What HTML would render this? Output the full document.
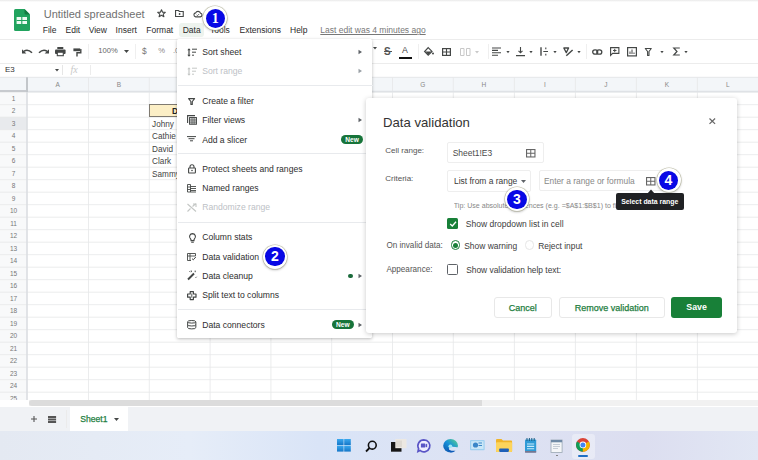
<!DOCTYPE html>
<html><head><meta charset="utf-8">
<style>
*{margin:0;padding:0;box-sizing:border-box}
html,body{width:758px;height:460px;overflow:hidden;background:#fff;font-family:"Liberation Sans",sans-serif;color:#202124}
.a{position:absolute;white-space:nowrap}
.t{position:absolute;white-space:nowrap}
svg{overflow:visible}
</style></head><body>
<svg class="a" style="left:0;top:0" width="758" height="460"><rect x="0" y="77.5" width="758" height="14.4" fill="#f3f6f9"/><line x1="0" x2="758" y1="77.3" y2="77.3" stroke="#e4e6e8" stroke-width="1"/><rect x="0" y="91.9" width="27" height="309.6" fill="#f8f9fa"/><rect x="0" y="117.2" width="27" height="12.5" fill="#e8eaed"/><line x1="0" x2="758" y1="92.20" y2="92.20" stroke="#e6e7e8" stroke-width="0.8"/><line x1="0" x2="758" y1="104.70" y2="104.70" stroke="#e6e7e8" stroke-width="0.8"/><line x1="0" x2="758" y1="117.20" y2="117.20" stroke="#e6e7e8" stroke-width="0.8"/><line x1="0" x2="758" y1="129.70" y2="129.70" stroke="#e6e7e8" stroke-width="0.8"/><line x1="0" x2="758" y1="142.20" y2="142.20" stroke="#e6e7e8" stroke-width="0.8"/><line x1="0" x2="758" y1="154.70" y2="154.70" stroke="#e6e7e8" stroke-width="0.8"/><line x1="0" x2="758" y1="167.20" y2="167.20" stroke="#e6e7e8" stroke-width="0.8"/><line x1="0" x2="758" y1="179.70" y2="179.70" stroke="#e6e7e8" stroke-width="0.8"/><line x1="0" x2="758" y1="192.20" y2="192.20" stroke="#e6e7e8" stroke-width="0.8"/><line x1="0" x2="758" y1="204.70" y2="204.70" stroke="#e6e7e8" stroke-width="0.8"/><line x1="0" x2="758" y1="217.20" y2="217.20" stroke="#e6e7e8" stroke-width="0.8"/><line x1="0" x2="758" y1="229.70" y2="229.70" stroke="#e6e7e8" stroke-width="0.8"/><line x1="0" x2="758" y1="242.20" y2="242.20" stroke="#e6e7e8" stroke-width="0.8"/><line x1="0" x2="758" y1="254.70" y2="254.70" stroke="#e6e7e8" stroke-width="0.8"/><line x1="0" x2="758" y1="267.20" y2="267.20" stroke="#e6e7e8" stroke-width="0.8"/><line x1="0" x2="758" y1="279.70" y2="279.70" stroke="#e6e7e8" stroke-width="0.8"/><line x1="0" x2="758" y1="292.20" y2="292.20" stroke="#e6e7e8" stroke-width="0.8"/><line x1="0" x2="758" y1="304.70" y2="304.70" stroke="#e6e7e8" stroke-width="0.8"/><line x1="0" x2="758" y1="317.20" y2="317.20" stroke="#e6e7e8" stroke-width="0.8"/><line x1="0" x2="758" y1="329.70" y2="329.70" stroke="#e6e7e8" stroke-width="0.8"/><line x1="0" x2="758" y1="342.20" y2="342.20" stroke="#e6e7e8" stroke-width="0.8"/><line x1="0" x2="758" y1="354.70" y2="354.70" stroke="#e6e7e8" stroke-width="0.8"/><line x1="0" x2="758" y1="367.20" y2="367.20" stroke="#e6e7e8" stroke-width="0.8"/><line x1="0" x2="758" y1="379.70" y2="379.70" stroke="#e6e7e8" stroke-width="0.8"/><line x1="0" x2="758" y1="392.20" y2="392.20" stroke="#e6e7e8" stroke-width="0.8"/><line x1="0" x2="758" y1="404.70" y2="404.70" stroke="#e6e7e8" stroke-width="0.8"/><line x1="27" x2="27" y1="77.5" y2="401.5" stroke="#e6e7e8" stroke-width="0.8"/><line x1="88.5" x2="88.5" y1="77.5" y2="401.5" stroke="#e6e7e8" stroke-width="0.8"/><line x1="149.3" x2="149.3" y1="77.5" y2="401.5" stroke="#e6e7e8" stroke-width="0.8"/><line x1="210.1" x2="210.1" y1="77.5" y2="401.5" stroke="#e6e7e8" stroke-width="0.8"/><line x1="270.9" x2="270.9" y1="77.5" y2="401.5" stroke="#e6e7e8" stroke-width="0.8"/><line x1="331.7" x2="331.7" y1="77.5" y2="401.5" stroke="#e6e7e8" stroke-width="0.8"/><line x1="392.5" x2="392.5" y1="77.5" y2="401.5" stroke="#e6e7e8" stroke-width="0.8"/><line x1="453.3" x2="453.3" y1="77.5" y2="401.5" stroke="#e6e7e8" stroke-width="0.8"/><line x1="514.4" x2="514.4" y1="77.5" y2="401.5" stroke="#e6e7e8" stroke-width="0.8"/><line x1="575.4" x2="575.4" y1="77.5" y2="401.5" stroke="#e6e7e8" stroke-width="0.8"/><line x1="636.4" x2="636.4" y1="77.5" y2="401.5" stroke="#e6e7e8" stroke-width="0.8"/><line x1="697.4" x2="697.4" y1="77.5" y2="401.5" stroke="#e6e7e8" stroke-width="0.8"/><line x1="758.4" x2="758.4" y1="77.5" y2="401.5" stroke="#e6e7e8" stroke-width="0.8"/><line x1="27" x2="758" y1="91.6" y2="91.6" stroke="#dfe2e6" stroke-width="1.5"/><line x1="0" x2="27" y1="91.0" y2="91.0" stroke="#c2c6ca" stroke-width="1.8"/><line x1="27" x2="27" y1="91.9" y2="401.5" stroke="#dadde1" stroke-width="1.4"/><line x1="27" x2="27" y1="77.3" y2="92" stroke="#c2c6ca" stroke-width="2"/></svg>
<div class="t" style="left:47.75px;width:20px;text-align:center;top:81px;font-size:6.5px;color:#888">A</div>
<div class="t" style="left:108.9px;width:20px;text-align:center;top:81px;font-size:6.5px;color:#888">B</div>
<div class="t" style="left:169.7px;width:20px;text-align:center;top:81px;font-size:6.5px;color:#888">C</div>
<div class="t" style="left:230.5px;width:20px;text-align:center;top:81px;font-size:6.5px;color:#888">D</div>
<div class="t" style="left:291.29999999999995px;width:20px;text-align:center;top:81px;font-size:6.5px;color:#888">E</div>
<div class="t" style="left:352.1px;width:20px;text-align:center;top:81px;font-size:6.5px;color:#888">F</div>
<div class="t" style="left:412.9px;width:20px;text-align:center;top:81px;font-size:6.5px;color:#888">G</div>
<div class="t" style="left:473.85px;width:20px;text-align:center;top:81px;font-size:6.5px;color:#888">H</div>
<div class="t" style="left:534.9px;width:20px;text-align:center;top:81px;font-size:6.5px;color:#888">I</div>
<div class="t" style="left:595.9px;width:20px;text-align:center;top:81px;font-size:6.5px;color:#888">J</div>
<div class="t" style="left:656.9px;width:20px;text-align:center;top:81px;font-size:6.5px;color:#888">K</div>
<div class="t" style="left:717.9px;width:20px;text-align:center;top:81px;font-size:6.5px;color:#888">L</div>
<div class="t" style="left:0;width:27px;text-align:center;top:94.95px;font-size:6.5px;color:#777">1</div>
<div class="t" style="left:0;width:27px;text-align:center;top:107.45px;font-size:6.5px;color:#777">2</div>
<div class="t" style="left:0;width:27px;text-align:center;top:119.95px;font-size:6.5px;color:#777">3</div>
<div class="t" style="left:0;width:27px;text-align:center;top:132.45px;font-size:6.5px;color:#777">4</div>
<div class="t" style="left:0;width:27px;text-align:center;top:144.95px;font-size:6.5px;color:#777">5</div>
<div class="t" style="left:0;width:27px;text-align:center;top:157.45px;font-size:6.5px;color:#777">6</div>
<div class="t" style="left:0;width:27px;text-align:center;top:169.95px;font-size:6.5px;color:#777">7</div>
<div class="t" style="left:0;width:27px;text-align:center;top:182.45px;font-size:6.5px;color:#777">8</div>
<div class="t" style="left:0;width:27px;text-align:center;top:194.95px;font-size:6.5px;color:#777">9</div>
<div class="t" style="left:0;width:27px;text-align:center;top:207.45px;font-size:6.5px;color:#777">10</div>
<div class="t" style="left:0;width:27px;text-align:center;top:219.95px;font-size:6.5px;color:#777">11</div>
<div class="t" style="left:0;width:27px;text-align:center;top:232.45px;font-size:6.5px;color:#777">12</div>
<div class="t" style="left:0;width:27px;text-align:center;top:244.95px;font-size:6.5px;color:#777">13</div>
<div class="t" style="left:0;width:27px;text-align:center;top:257.45px;font-size:6.5px;color:#777">14</div>
<div class="t" style="left:0;width:27px;text-align:center;top:269.95px;font-size:6.5px;color:#777">15</div>
<div class="t" style="left:0;width:27px;text-align:center;top:282.45px;font-size:6.5px;color:#777">16</div>
<div class="t" style="left:0;width:27px;text-align:center;top:294.95px;font-size:6.5px;color:#777">17</div>
<div class="t" style="left:0;width:27px;text-align:center;top:307.45px;font-size:6.5px;color:#777">18</div>
<div class="t" style="left:0;width:27px;text-align:center;top:319.95px;font-size:6.5px;color:#777">19</div>
<div class="t" style="left:0;width:27px;text-align:center;top:332.45px;font-size:6.5px;color:#777">20</div>
<div class="t" style="left:0;width:27px;text-align:center;top:344.95px;font-size:6.5px;color:#777">21</div>
<div class="t" style="left:0;width:27px;text-align:center;top:357.45px;font-size:6.5px;color:#777">22</div>
<div class="t" style="left:0;width:27px;text-align:center;top:369.95px;font-size:6.5px;color:#777">23</div>
<div class="t" style="left:0;width:27px;text-align:center;top:382.45px;font-size:6.5px;color:#777">24</div>
<div class="t" style="left:0;width:27px;text-align:center;top:394.95px;font-size:6.5px;color:#777">25</div>
<div class="a" style="left:149px;top:104.1px;width:40px;height:13.4px;background:#fcefc6;border:1px solid #7f7a70"></div>
<div class="t" style="left:172px;top:106.80px;font-size:8.4px;height:8.4px;line-height:8.4px;color:#222;"><b>D</b></div>
<div class="t" style="left:152.1px;top:120.60px;font-size:8.2px;height:8.2px;line-height:8.2px;color:#444;">Johny</div>
<div class="t" style="left:152.1px;top:133.15px;font-size:8.2px;height:8.2px;line-height:8.2px;color:#444;">Cathie</div>
<div class="t" style="left:152.1px;top:145.70px;font-size:8.2px;height:8.2px;line-height:8.2px;color:#444;">David</div>
<div class="t" style="left:152.1px;top:158.25px;font-size:8.2px;height:8.2px;line-height:8.2px;color:#444;">Clark</div>
<div class="t" style="left:152.1px;top:170.80px;font-size:8.2px;height:8.2px;line-height:8.2px;color:#444;">Sammy</div>
<svg class="a" style="left:14.3px;top:8.9px" width="16" height="22" viewBox="0 0 16 22">
  <path d="M1.5 0H10.5L16 5.5V20.5Q16 22 14.5 22H1.5Q0 22 0 20.5V1.5Q0 0 1.5 0Z" fill="#21a35e"/>
  <path d="M10.5 0L16 5.5H12Q10.5 5.5 10.5 4Z" fill="#137a40"/>
  <rect x="2.6" y="8" width="10.4" height="7" fill="#eefaf2"/>
  <path d="M7.8 8V15M2.6 11.5H13" stroke="#21a35e" stroke-width="1.1"/>
</svg>
<div class="t" style="left:43.7px;top:8.50px;font-size:11px;height:11px;line-height:11px;color:#707070;">Untitled spreadsheet</div>
<div class="a" style="left:178.5px;top:23px;width:25px;height:13.8px;background:#edf3ee;border-radius:3px"></div>
<div class="t" style="left:42.7px;top:26.15px;font-size:8.5px;height:8.5px;line-height:8.5px;color:#2a2a2a;">File</div>
<div class="t" style="left:65.5px;top:26.15px;font-size:8.5px;height:8.5px;line-height:8.5px;color:#2a2a2a;">Edit</div>
<div class="t" style="left:88.7px;top:26.15px;font-size:8.5px;height:8.5px;line-height:8.5px;color:#2a2a2a;">View</div>
<div class="t" style="left:115.6px;top:26.15px;font-size:8.5px;height:8.5px;line-height:8.5px;color:#2a2a2a;">Insert</div>
<div class="t" style="left:146.3px;top:26.15px;font-size:8.5px;height:8.5px;line-height:8.5px;color:#2a2a2a;">Format</div>
<div class="t" style="left:182.7px;top:26.15px;font-size:8.5px;height:8.5px;line-height:8.5px;color:#2a2a2a;">Data</div>
<div class="t" style="left:210px;top:26.15px;font-size:8.5px;height:8.5px;line-height:8.5px;color:#2a2a2a;">Tools</div>
<div class="t" style="left:239.5px;top:26.15px;font-size:8.5px;height:8.5px;line-height:8.5px;color:#2a2a2a;">Extensions</div>
<div class="t" style="left:290px;top:26.15px;font-size:8.5px;height:8.5px;line-height:8.5px;color:#2a2a2a;">Help</div>
<div class="t" style="left:320.3px;top:26.15px;font-size:8.5px;height:8.5px;line-height:8.5px;color:#777;text-decoration:underline">Last edit was 4 minutes ago</div>
<div class="a" style="left:0px;top:0px;width:758px;height:2px;background:linear-gradient(#e9e9e9,#fff)"></div>
<div class="a" style="left:0px;top:39px;width:758px;height:1px;background:#ececec"></div>
<div class="a" style="left:0px;top:63.4px;width:758px;height:1px;background:#ececec"></div>
<div class="t" style="left:5px;top:66.00px;font-size:8px;height:8px;line-height:8px;color:#333;">E3</div>
<div class="a" style="left:0px;top:400.3px;width:758px;height:6.5px;background:#fff"></div>
<div class="a" style="left:29.3px;top:400.3px;width:758px;height:6px;background:#f1f1f1"></div>
<div class="a" style="left:29.3px;top:400.3px;width:453px;height:6px;background:#dcdcdc;border-radius:3px 0 0 3px"></div>
<div class="a" style="left:0px;top:406.5px;width:758px;height:24.7px;background:#f0f2f5"></div>
<div class="a" style="left:69.8px;top:406.5px;width:58.6px;height:24.7px;background:#fff"></div>
<div class="t" style="left:80.3px;top:414.90px;font-size:8.6px;height:8.6px;line-height:8.6px;color:#1e7e3e;-webkit-text-stroke:0.25px #1e7e3e">Sheet1</div>
<div class="a" style="left:0px;top:431.2px;width:758px;height:28.8px;background:linear-gradient(90deg,#e4e9f2 0%,#e6edf8 25%,#d9e4f7 42%,#dde3f4 60%,#dcdef0 85%,#e2e7f4 100%)"></div>
<svg class="a" style="left:157.3px;top:9.2px" width="9" height="8.2" viewBox="0 0 9 8.2"><path d="M4.5 0.7L5.6 3.2L8.3 3.4L6.2 5.2L6.9 7.7L4.5 6.3L2.1 7.7L2.8 5.2L0.7 3.4L3.4 3.2Z" fill="none" stroke="#444746" stroke-width="1.1" stroke-linejoin="round"/></svg>
<svg class="a" style="left:175.2px;top:9.8px" width="8.8" height="7" viewBox="0 0 8.8 7"><path d="M0.55 0.55H3.5L4.4 1.5H8.25V6.45H0.55Z" fill="none" stroke="#444746" stroke-width="1.1"/><circle cx="4.6" cy="4" r="0.9" fill="#444746"/></svg>
<svg class="a" style="left:193.2px;top:10.8px" width="9.6" height="6.4" viewBox="0 0 9.6 6.4"><path d="M2.6 5.85H7.4A1.8 1.8 0 0 0 7.6 2.3A2.7 2.7 0 0 0 2.6 1.9A2 2 0 0 0 2.6 5.85Z" fill="none" stroke="#444746" stroke-width="1.1"/><path d="M3.6 3.9L4.6 4.6L6.2 3" fill="none" stroke="#444746" stroke-width="0.8"/></svg>
<svg class="a" style="left:21px;top:47.7px" width="12" height="8" viewBox="0 0 12 8"><path d="M3 3.2Q7 0.8 11 4.8" fill="none" stroke="#444746" stroke-width="1.6"/><path d="M1 1.2V5.6H5.4Z" fill="#444746"/></svg>
<svg class="a" style="left:37.5px;top:47.7px" width="12" height="8" viewBox="0 0 12 8"><path d="M9 3.2Q5 0.8 1 4.8" fill="none" stroke="#444746" stroke-width="1.6"/><path d="M11 1.2V5.6H6.6Z" fill="#444746"/></svg>
<svg class="a" style="left:55.4px;top:47.2px" width="10.6" height="8.8" viewBox="0 0 10.6 8.8"><rect x="2.3" y="0" width="6" height="2" fill="#444746"/><rect x="0" y="2.4" width="10.6" height="4.6" rx="1" fill="#444746"/><rect x="2.3" y="5.2" width="6" height="3.5" fill="#fff" stroke="#444746" stroke-width="1.1"/></svg>
<svg class="a" style="left:73.4px;top:47.5px" width="8.4" height="8.5" viewBox="0 0 8.4 8.5"><path d="M0.4 0.4H7.2V3.2H0.4Z" fill="#444746"/><path d="M7.2 1.8H7.8V4.8H4V8.5" fill="none" stroke="#444746" stroke-width="1.4"/></svg>
<div class="a" style="left:88px;top:44px;width:0.8px;height:15px;background:#efefef"></div>
<div class="t" style="left:98.3px;top:47.20px;font-size:7.6px;height:7.6px;line-height:7.6px;color:#666;">100%</div>
<svg class="a" style="left:123.5px;top:50px" width="5" height="3" viewBox="0 0 5 3"><path d="M0 0H5L2.5 3Z" fill="#444746"/></svg>
<div class="a" style="left:135px;top:44px;width:0.8px;height:15px;background:#efefef"></div>
<div class="t" style="left:142px;top:47.00px;font-size:8.4px;height:8.4px;line-height:8.4px;color:#777;">$</div>
<div class="t" style="left:158.3px;top:47.20px;font-size:7.6px;height:7.6px;line-height:7.6px;color:#888;">%</div>
<div class="t" style="left:173px;top:47.20px;font-size:7.6px;height:7.6px;line-height:7.6px;color:#888;">.0</div>
<svg class="a" style="left:372.5px;top:47px" width="4" height="3" viewBox="0 0 4 3"><path d="M0 0H4L2 2.5Z" fill="#444746"/></svg>
<div class="t" style="left:384px;top:46.50px;font-size:10px;height:10px;line-height:10px;color:#555;font-weight:bold">S</div>
<div class="a" style="left:383.5px;top:51.2px;width:8.5px;height:1.1px;background:#555"></div>
<div class="t" style="left:402px;top:46.10px;font-size:8.8px;height:8.8px;line-height:8.8px;color:#444;">A</div>
<div class="a" style="left:399px;top:56.6px;width:12.6px;height:2.1px;background:#111"></div>
<div class="a" style="left:417.5px;top:44px;width:0.8px;height:15px;background:#efefef"></div>
<svg class="a" style="left:424px;top:46.5px" width="10" height="8.5" viewBox="0 0 10 8.5"><path d="M4.2 0.6L8 4.4L4.2 8.2L0.6 4.6Z" fill="none" stroke="#444746" stroke-width="1.2"/><path d="M1.2 4.6H7.4L4.2 7.7Z" fill="#444746"/><circle cx="9" cy="6.6" r="1" fill="#444746"/></svg>
<svg class="a" style="left:442.4px;top:48px" width="9" height="8" viewBox="0 0 9 8"><rect x="0.6" y="0.6" width="7.8" height="6.8" fill="none" stroke="#444746" stroke-width="1.2"/><path d="M4.5 0.6V7.4M0.6 4H8.4" stroke="#444746" stroke-width="1.1"/></svg>
<svg class="a" style="left:459.8px;top:48px" width="10.5" height="8" viewBox="0 0 10.5 8"><path d="M0.5 0.5H4M6.5 0.5H10M0.5 7.5H4M6.5 7.5H10M0.5 0.5V7.5M10 0.5V7.5M4 0.5V7.5M6.5 0.5V7.5" fill="none" stroke="#c8c8c8" stroke-width="1"/></svg>
<svg class="a" style="left:475px;top:50.5px" width="4" height="3" viewBox="0 0 4 3"><path d="M0 0H4L2 2.5Z" fill="#c8c8c8"/></svg>
<div class="a" style="left:487.5px;top:44px;width:0.8px;height:15px;background:#efefef"></div>
<svg class="a" style="left:492.2px;top:47px" width="9" height="9" viewBox="0 0 9 9"><path d="M0 1H9M0 3.4H6M0 5.8H9M0 8.2H6" stroke="#444746" stroke-width="1.1"/></svg>
<svg class="a" style="left:505.8px;top:50.8px" width="4" height="3" viewBox="0 0 4 3"><path d="M0.4 0H3.6L2 2.2Z" fill="#444746"/></svg>
<svg class="a" style="left:516px;top:46.5px" width="9" height="9.5" viewBox="0 0 9 9.5"><path d="M4.5 0V5.5M2.5 3.8L4.5 5.8L6.5 3.8M0 8.6H9" fill="none" stroke="#444746" stroke-width="1.1"/></svg>
<svg class="a" style="left:529px;top:50.8px" width="4" height="3" viewBox="0 0 4 3"><path d="M0.4 0H3.6L2 2.2Z" fill="#444746"/></svg>
<svg class="a" style="left:539.5px;top:46.8px" width="8" height="9" viewBox="0 0 8 9"><path d="M1 0.3V8.7" stroke="#444746" stroke-width="1.4"/><path d="M5.8 0.5V2.3M5.8 6.7V8.5M3.3 4.5H8" stroke="#444746" stroke-width="1.1"/></svg>
<svg class="a" style="left:553px;top:50.8px" width="4" height="3" viewBox="0 0 4 3"><path d="M0.4 0H3.6L2 2.2Z" fill="#444746"/></svg>
<svg class="a" style="left:563px;top:46.8px" width="10" height="9.5" viewBox="0 0 10 9.5"><path d="M0.8 1H5.6L3.3 5.6Z" fill="none" stroke="#444746" stroke-width="1.3" stroke-linejoin="round"/><path d="M3.3 8.8L9.6 3" stroke="#444746" stroke-width="1.5"/></svg>
<svg class="a" style="left:577px;top:50.8px" width="4" height="3" viewBox="0 0 4 3"><path d="M0.4 0H3.6L2 2.2Z" fill="#444746"/></svg>
<div class="a" style="left:586px;top:44px;width:0.8px;height:15px;background:#efefef"></div>
<svg class="a" style="left:592px;top:48.5px" width="10.5" height="6" viewBox="0 0 10.5 6"><rect x="0.7" y="0.8" width="5" height="4.4" rx="2.2" fill="none" stroke="#444746" stroke-width="1.3"/><rect x="4.8" y="0.8" width="5" height="4.4" rx="2.2" fill="none" stroke="#444746" stroke-width="1.3"/></svg>
<svg class="a" style="left:610px;top:47.2px" width="9.2" height="8.2" viewBox="0 0 9.2 8.2"><path d="M0.6 0.6H8.9V6.4H2.6L0.6 8.4Z" fill="none" stroke="#444746" stroke-width="1.1"/><path d="M4.75 1.8V5.2M3 3.5H6.5" stroke="#444746" stroke-width="1"/></svg>
<svg class="a" style="left:626.6px;top:47px" width="10" height="9.5" viewBox="0 0 10 9.5"><rect x="0.6" y="0.6" width="8.8" height="8.3" fill="none" stroke="#444746" stroke-width="1.2"/><path d="M3 7V4.5M5 7V2.5M7 7V5.5" stroke="#444746" stroke-width="1"/></svg>
<svg class="a" style="left:645.2px;top:47.5px" width="6.6" height="8" viewBox="0 0 6.6 8"><path d="M0.3 0.5H6.3L4 3.5V7.5H2.6V3.5Z" fill="none" stroke="#444746" stroke-width="1.1" stroke-linejoin="round"/></svg>
<svg class="a" style="left:660px;top:50.8px" width="4" height="3" viewBox="0 0 4 3"><path d="M0.4 0H3.6L2 2.2Z" fill="#444746"/></svg>
<svg class="a" style="left:672.5px;top:47px" width="7" height="9" viewBox="0 0 7 9"><path d="M6.8 1H0.8L4 4.5L0.8 8H6.8" fill="none" stroke="#444746" stroke-width="1.2"/></svg>
<svg class="a" style="left:683.5px;top:50.8px" width="4" height="3" viewBox="0 0 4 3"><path d="M0.4 0H3.6L2 2.2Z" fill="#444746"/></svg>
<svg class="a" style="left:54.5px;top:69.3px" width="4" height="3" viewBox="0 0 4 3"><path d="M0 0H4L2 2.5Z" fill="#444746"/></svg>
<div class="a" style="left:62.3px;top:65px;width:0.8px;height:10px;background:#e6e6e6"></div>
<div class="t" style="left:70.5px;top:65px;font-size:10px;line-height:10px;color:#c8c8c8;font-family:'Liberation Serif',serif;font-style:italic">fx</div>
<div class="a" style="left:90px;top:65px;width:0.8px;height:10px;background:#ececec"></div>
<div class="a" style="left:177.3px;top:38.7px;width:195px;height:299px;background:#fff;box-shadow:0 1px 3.5px rgba(0,0,0,.28);border-radius:1.5px"></div>
<div class="t" style="left:202.2px;top:47.60px;font-size:8.6px;height:8.6px;line-height:8.6px;color:#2e2e2e;">Sort sheet</div>
<svg class="a" style="left:357px;top:48.7px" width="6" height="6"><path d="M1.5 0.8L5 3L1.5 5.2Z" fill="#5f6368"/></svg>
<div class="t" style="left:202.2px;top:67.10px;font-size:8.6px;height:8.6px;line-height:8.6px;color:#bdc1c6;">Sort range</div>
<svg class="a" style="left:357px;top:68.2px" width="6" height="6"><path d="M1.5 0.8L5 3L1.5 5.2Z" fill="#9aa0a6"/></svg>
<div class="t" style="left:202.2px;top:96.50px;font-size:8.6px;height:8.6px;line-height:8.6px;color:#2e2e2e;">Create a filter</div>
<div class="t" style="left:202.2px;top:116.10px;font-size:8.6px;height:8.6px;line-height:8.6px;color:#2e2e2e;">Filter views</div>
<svg class="a" style="left:357px;top:117.2px" width="6" height="6"><path d="M1.5 0.8L5 3L1.5 5.2Z" fill="#5f6368"/></svg>
<div class="t" style="left:202.2px;top:135.50px;font-size:8.6px;height:8.6px;line-height:8.6px;color:#2e2e2e;">Add a slicer</div>
<div class="t" style="left:202.2px;top:164.70px;font-size:8.6px;height:8.6px;line-height:8.6px;color:#2e2e2e;">Protect sheets and ranges</div>
<div class="t" style="left:202.2px;top:184.10px;font-size:8.6px;height:8.6px;line-height:8.6px;color:#2e2e2e;">Named ranges</div>
<div class="t" style="left:202.2px;top:203.40px;font-size:8.6px;height:8.6px;line-height:8.6px;color:#bdc1c6;">Randomize range</div>
<div class="t" style="left:202.2px;top:233.30px;font-size:8.6px;height:8.6px;line-height:8.6px;color:#2e2e2e;">Column stats</div>
<div class="t" style="left:202.2px;top:252.70px;font-size:8.6px;height:8.6px;line-height:8.6px;color:#2e2e2e;">Data validation</div>
<div class="t" style="left:202.2px;top:272.20px;font-size:8.6px;height:8.6px;line-height:8.6px;color:#2e2e2e;">Data cleanup</div>
<svg class="a" style="left:357px;top:273.3px" width="6" height="6"><path d="M1.5 0.8L5 3L1.5 5.2Z" fill="#5f6368"/></svg>
<div class="t" style="left:202.2px;top:291.30px;font-size:8.6px;height:8.6px;line-height:8.6px;color:#2e2e2e;">Split text to columns</div>
<div class="t" style="left:202.2px;top:321.10px;font-size:8.6px;height:8.6px;line-height:8.6px;color:#2e2e2e;">Data connectors</div>
<svg class="a" style="left:357px;top:322.2px" width="6" height="6"><path d="M1.5 0.8L5 3L1.5 5.2Z" fill="#5f6368"/></svg>
<div class="a" style="left:177.5px;top:85px;width:195px;height:1px;background:#e8eaed"></div>
<div class="a" style="left:177.5px;top:153.1px;width:195px;height:1px;background:#e8eaed"></div>
<div class="a" style="left:177.5px;top:221.7px;width:195px;height:1px;background:#e8eaed"></div>
<div class="a" style="left:177.5px;top:309.05px;width:195px;height:1px;background:#e8eaed"></div>
<div class="a" style="left:366.4px;top:98.4px;width:370.2px;height:234.2px;background:#fff;box-shadow:0 1px 5px rgba(0,0,0,.22);border-radius:3px"></div>
<div class="t" style="left:383px;top:116.02px;font-size:13.15px;height:13.15px;line-height:13.15px;color:#333;">Data validation</div>
<div class="t" style="left:385.2px;top:147.17px;font-size:8.05px;height:8.05px;line-height:8.05px;color:#555;">Cell range:</div>
<div class="t" style="left:385.2px;top:175.28px;font-size:8.05px;height:8.05px;line-height:8.05px;color:#555;">Criteria:</div>
<div class="a" style="left:447.1px;top:141.9px;width:96.6px;height:21.3px;border:1px solid #eeeeee;border-radius:2px"></div>
<div class="t" style="left:452.7px;top:149.18px;font-size:8.45px;height:8.45px;line-height:8.45px;color:#4a4a4a;">Sheet1!E3</div>
<div class="a" style="left:447.1px;top:170.4px;width:83.9px;height:21.3px;border:1px solid #eeeeee;border-radius:2px"></div>
<div class="t" style="left:454px;top:177.18px;font-size:8.45px;height:8.45px;line-height:8.45px;color:#3a3a3a;">List from a range</div>
<div class="a" style="left:539px;top:170px;width:130px;height:21.4px;border:1px solid #eeeeee;border-radius:2px"></div>
<div class="t" style="left:543.9px;top:177.20px;font-size:8.4px;height:8.4px;line-height:8.4px;color:#888;">Enter a range or formula</div>
<div class="a" style="left:453.8px;top:200px;width:162px;height:11px;overflow:hidden"><div class="t" style="left:0;top:1.5px;font-size:7.05px;line-height:7.05px;color:#888">Tip: Use absolute references (e.g. =$A$1:$B$1) to fix the range</div></div>
<div class="a" style="left:447px;top:218px;width:11.2px;height:10.8px;background:#188038;border-radius:1.5px"></div>
<div class="t" style="left:465.8px;top:219.95px;font-size:8.5px;height:8.5px;line-height:8.5px;color:#3c3c3c;">Show dropdown list in cell</div>
<div class="t" style="left:386.4px;top:241.93px;font-size:8.15px;height:8.15px;line-height:8.15px;color:#555;">On invalid data:</div>
<div class="t" style="left:464.2px;top:241.97px;font-size:8.45px;height:8.45px;line-height:8.45px;color:#3c3c3c;">Show warning</div>
<div class="t" style="left:538.2px;top:242.00px;font-size:8.4px;height:8.4px;line-height:8.4px;color:#3c3c3c;">Reject input</div>
<div class="t" style="left:386.4px;top:265.93px;font-size:8.15px;height:8.15px;line-height:8.15px;color:#555;">Appearance:</div>
<div class="a" style="left:447px;top:264px;width:11.4px;height:11px;border:1.3px solid #5f6368;border-radius:1.5px"></div>
<div class="t" style="left:466.2px;top:265.80px;font-size:8.4px;height:8.4px;line-height:8.4px;color:#3c3c3c;">Show validation help text:</div>
<div class="a" style="left:493.7px;top:297px;width:58.3px;height:21.3px;border:1px solid #e8e8e8;border-radius:3px"></div>
<div class="a" style="left:558.9px;top:297px;width:105.7px;height:21.3px;border:1px solid #e8e8e8;border-radius:3px"></div>
<div class="a" style="left:671.4px;top:297px;width:50.5px;height:21.3px;background:#188038;border-radius:3px"></div>
<div class="t" style="left:493.7px;width:58.3px;text-align:center;top:303.8px;font-size:9px;line-height:8.4px;color:#1e7e3e;-webkit-text-stroke:0.25px #1e7e3e">Cancel</div>
<div class="t" style="left:558.9px;width:105.7px;text-align:center;top:303.8px;font-size:9px;line-height:8.4px;color:#1e7e3e;-webkit-text-stroke:0.25px #1e7e3e">Remove validation</div>
<div class="t" style="left:671.4px;width:50.5px;text-align:center;top:303px;font-size:8.8px;line-height:8.8px;color:#fff;font-weight:bold">Save</div>
<div class="a" style="left:615.9px;top:193.2px;width:67.7px;height:16.6px;background:#202124;border-radius:2px"></div>
<div class="t" style="left:615.9px;width:67.7px;text-align:center;top:198.6px;font-size:6.9px;line-height:6.9px;color:#fff;font-weight:bold">Select data range</div>
<svg class="a" style="left:186.5px;top:47.5px" width="11" height="9" viewBox="0 0 11 9"><path d="M2 1.2V7.8" stroke="#444746" stroke-width="1.2"/><path d="M0.3 2.2L2 0.2L3.7 2.2ZM0.3 6.8L2 8.8L3.7 6.8Z" fill="#444746"/><path d="M5 1.2H10M5 4.2H9M5 7.2H7" stroke="#444746" stroke-width="1"/></svg>
<svg class="a" style="left:186.5px;top:67px" width="11" height="9" viewBox="0 0 11 9"><path d="M2 1.2V7.8" stroke="#c4c7c5" stroke-width="1.2"/><path d="M0.3 2.2L2 0.2L3.7 2.2ZM0.3 6.8L2 8.8L3.7 6.8Z" fill="#c4c7c5"/><path d="M5 1.2H10M5 4.2H9M5 7.2H7" stroke="#c4c7c5" stroke-width="1"/></svg>
<svg class="a" style="left:187.8px;top:97.5px" width="7.2" height="7" viewBox="0 0 7.2 7"><path d="M0.6 0.6H6.6L4.3 3.5V6.4H2.9V3.5Z" fill="none" stroke="#444746" stroke-width="1.1" stroke-linejoin="round"/></svg>
<svg class="a" style="left:187px;top:115px" width="10" height="9.8" viewBox="0 0 10 9.8"><path d="M0.6 8V0.6H8" fill="none" stroke="#444746" stroke-width="1.1"/><rect x="2.6" y="2.6" width="6.8" height="6.6" fill="none" stroke="#444746" stroke-width="1.1"/><path d="M2.6 5H9.4M2.6 7.1H9.4M5 2.6V9.2M7.1 2.6V9.2" stroke="#444746" stroke-width="0.8"/></svg>
<svg class="a" style="left:187px;top:135.5px" width="9" height="5.5" viewBox="0 0 9 5.5"><path d="M0 0.6H9M1.5 2.7H7.5M3 4.8H6" stroke="#444746" stroke-width="1"/></svg>
<svg class="a" style="left:188.3px;top:164.3px" width="8" height="9.5" viewBox="0 0 8 9.5"><path d="M2 4V2.8A2 2 0 0 1 6 2.8V4" fill="none" stroke="#444746" stroke-width="1.1"/><rect x="0.6" y="4" width="6.8" height="5" rx="0.6" fill="none" stroke="#444746" stroke-width="1.1"/><circle cx="4" cy="6.5" r="0.8" fill="#444746"/></svg>
<svg class="a" style="left:187px;top:183.8px" width="9.5" height="8.5" viewBox="0 0 9.5 8.5"><path d="M0.5 0.5V8M0.5 0.5H3.5M0.5 8H9M3.5 0.5V8M3.5 2.5H9M3.5 4.5H9M3.5 6.5H9M0.5 3H3.5M0.5 5.5H3.5" fill="none" stroke="#444746" stroke-width="0.9"/></svg>
<svg class="a" style="left:187px;top:203px" width="10" height="9" viewBox="0 0 10 9"><path d="M0.5 1L9 8.5M6 1H9V4M0.5 8.5L3.5 5.5M5.5 3.5L9 0.5" fill="none" stroke="#c4c7c5" stroke-width="1.1"/></svg>
<svg class="a" style="left:188.6px;top:232.5px" width="7" height="10" viewBox="0 0 7 10"><path d="M3.5 0.6A3 3 0 0 1 5.6 5.7L5 6.6V7.6H2V6.6L1.4 5.7A3 3 0 0 1 3.5 0.6Z" fill="none" stroke="#444746" stroke-width="1.1"/><path d="M2.2 9.2H4.8" stroke="#444746" stroke-width="1.1"/></svg>
<svg class="a" style="left:186.7px;top:252.5px" width="9.5" height="8" viewBox="0 0 9.5 8"><path d="M0.5 0.5H8.5V3M0.5 0.5V7.5H4M0.5 3H8.5M3 0.5V7.5" fill="none" stroke="#444746" stroke-width="0.9"/><path d="M5 5.6L6.3 6.8L8.8 4" fill="none" stroke="#444746" stroke-width="1"/></svg>
<svg class="a" style="left:186.8px;top:269.8px" width="10.5" height="10.5" viewBox="0 0 10.5 10.5"><path d="M1 9.5L7 3.5" stroke="#444746" stroke-width="1.9"/><path d="M2.5 1.2L3.5 2.2M8.2 0.6V2.2M9.6 6.8L8.6 7.8M4.2 0.5L4.6 1.8" stroke="#444746" stroke-width="1"/></svg>
<svg class="a" style="left:187.2px;top:291px" width="9.6" height="9.2" viewBox="0 0 9.6 9.2"><path d="M3.2 0.6H6.4V3H9V6.2H6.4V8.6H3.2V6.2H0.6V3H3.2Z" fill="none" stroke="#444746" stroke-width="1.2" stroke-linejoin="round"/><path d="M4.8 2.5V6.7" stroke="#444746" stroke-width="0.9"/></svg>
<svg class="a" style="left:187px;top:319.6px" width="9.5" height="9.5" viewBox="0 0 9.5 9.5"><ellipse cx="4.75" cy="1.8" rx="4.1" ry="1.3" fill="none" stroke="#444746" stroke-width="1"/><path d="M0.65 1.8V7.6A4.1 1.3 0 0 0 8.85 7.6V1.8M0.65 4.7A4.1 1.3 0 0 0 8.85 4.7" fill="none" stroke="#444746" stroke-width="1"/></svg>
<div class="t" style="left:341px;top:134.7px;width:22px;height:9.6px;border-radius:5px;background:#17743a;color:#fff;font-size:6.6px;line-height:9.5px;text-align:center;font-weight:bold">New</div>
<div class="t" style="left:331.9px;top:319.8px;width:21.9px;height:9.6px;border-radius:5px;background:#17743a;color:#fff;font-size:6.6px;line-height:9.6px;text-align:center;font-weight:bold">New</div>
<div class="a" style="left:348px;top:273.5px;width:4.6px;height:4.6px;border-radius:50%;background:#1b6b3c"></div>
<svg class="a" style="left:708.6px;top:118.2px" width="6.6" height="6.4" viewBox="0 0 6.6 6.4"><path d="M0.5 0.5L6.1 5.9M6.1 0.5L0.5 5.9" stroke="#666" stroke-width="1.2"/></svg>
<svg class="a" style="left:526.3px;top:148.7px" width="9.5" height="8.5" viewBox="0 0 9.5 8.5"><rect x="0.55" y="0.55" width="8.4" height="7.4" fill="none" stroke="#666" stroke-width="1.1"/><path d="M4.75 0.5V8M0.5 4.25H9" stroke="#666" stroke-width="1"/></svg>
<svg class="a" style="left:645.5px;top:176.8px" width="9.5" height="8.5" viewBox="0 0 9.5 8.5"><rect x="0.55" y="0.55" width="8.4" height="7.4" fill="none" stroke="#666" stroke-width="1.1"/><path d="M4.75 0.5V8M0.5 4.25H9" stroke="#666" stroke-width="1"/></svg>
<svg class="a" style="left:520.5px;top:180.3px" width="5" height="3" viewBox="0 0 5 3"><path d="M0 0H5L2.5 3Z" fill="#5f6368"/></svg>
<svg class="a" style="left:448.5px;top:219.5px" width="8" height="8" viewBox="0 0 8 8"><path d="M1.2 4L3.3 6L7 1.8" fill="none" stroke="#fff" stroke-width="1.3"/></svg>
<div class="a" style="left:450.7px;top:240.2px;width:9.8px;height:9.8px;border-radius:50%;border:1.2px solid #188038"></div>
<div class="a" style="left:453.1px;top:242.6px;width:5px;height:5px;border-radius:50%;background:#188038"></div>
<div class="a" style="left:524.6px;top:240.2px;width:9.8px;height:9.8px;border-radius:50%;border:1px solid #e6e6e6"></div>
<svg class="a" style="left:647px;top:188.5px" width="8" height="5" viewBox="0 0 8 5"><path d="M0 5L4 0.5L8 5Z" fill="#202124"/></svg>
<div class="a" style="left:203.2px;top:6.300000000000001px;width:24px;height:24px;border-radius:50%;background:#fff;box-shadow:0 0 0.6px 0.6px rgba(150,150,110,.55),0 1px 2.5px rgba(0,0,0,.3)"></div>
<div class="a" style="left:205.5px;top:8.600000000000001px;width:19.4px;height:19.4px;border-radius:50%;background:radial-gradient(circle,#0808e6 60%,#0000c0 100%)"></div>
<div class="t" style="left:205.2px;top:11.0px;width:20px;text-align:center;font-size:14px;line-height:15px;color:#fff;font-weight:bold;font-family:'Liberation Serif',serif;">1</div>
<div class="a" style="left:262.9px;top:244.5px;width:24px;height:24px;border-radius:50%;background:#fff;box-shadow:0 0 0.6px 0.6px rgba(150,150,110,.55),0 1px 2.5px rgba(0,0,0,.3)"></div>
<div class="a" style="left:265.2px;top:246.8px;width:19.4px;height:19.4px;border-radius:50%;background:radial-gradient(circle,#0808e6 60%,#0000c0 100%)"></div>
<div class="t" style="left:264.9px;top:249.2px;width:20px;text-align:center;font-size:14px;line-height:15px;color:#fff;font-weight:bold;">2</div>
<div class="a" style="left:504.9px;top:187.3px;width:24px;height:24px;border-radius:50%;background:#fff;box-shadow:0 0 0.6px 0.6px rgba(150,150,110,.55),0 1px 2.5px rgba(0,0,0,.3)"></div>
<div class="a" style="left:507.2px;top:189.60000000000002px;width:19.4px;height:19.4px;border-radius:50%;background:radial-gradient(circle,#0808e6 60%,#0000c0 100%)"></div>
<div class="t" style="left:506.9px;top:192.0px;width:20px;text-align:center;font-size:14px;line-height:15px;color:#fff;font-weight:bold;">3</div>
<div class="a" style="left:656.5px;top:168.2px;width:24px;height:24px;border-radius:50%;background:#fff;box-shadow:0 0 0.6px 0.6px rgba(150,150,110,.55),0 1px 2.5px rgba(0,0,0,.3)"></div>
<div class="a" style="left:658.8px;top:170.5px;width:19.4px;height:19.4px;border-radius:50%;background:radial-gradient(circle,#0808e6 60%,#0000c0 100%)"></div>
<div class="t" style="left:658.5px;top:172.89999999999998px;width:20px;text-align:center;font-size:14px;line-height:15px;color:#fff;font-weight:bold;">4</div>
<svg class="a" style="left:31.2px;top:416.2px" width="6" height="6" viewBox="0 0 6 6"><path d="M3 0V6M0 3H6" stroke="#555" stroke-width="1.1"/></svg>
<svg class="a" style="left:48.4px;top:416px" width="8.1" height="7" viewBox="0 0 8.1 7"><path d="M0 1H8.1M0 3.5H8.1M0 6H8.1" stroke="#555" stroke-width="1.8"/></svg>
<div class="a" style="left:66px;top:410px;width:0.7px;height:18px;background:#ebebeb"></div>
<svg class="a" style="left:114px;top:418px" width="5" height="3" viewBox="0 0 5 3"><path d="M0 0H5L2.5 3Z" fill="#444746"/></svg>
<svg class="a" style="left:337.4px;top:439.4px" width="13.8" height="12.6" viewBox="0 0 13.8 12.6"><defs><linearGradient id="wg" x1="0" y1="0" x2="0" y2="1"><stop offset="0" stop-color="#3aa8ef"/><stop offset="1" stop-color="#1577c8"/></linearGradient></defs><rect x="0" y="0" width="6.6" height="6" fill="url(#wg)"/><rect x="7.2" y="0" width="6.6" height="6" fill="url(#wg)"/><rect x="0" y="6.6" width="6.6" height="6" fill="url(#wg)"/><rect x="7.2" y="6.6" width="6.6" height="6" fill="url(#wg)"/></svg>
<svg class="a" style="left:364.5px;top:439.5px" width="12.5" height="12.5" viewBox="0 0 12.5 12.5"><circle cx="7.3" cy="5.2" r="3.9" fill="none" stroke="#111" stroke-width="1.6"/><path d="M4.5 8L1 11.5" stroke="#111" stroke-width="1.8"/></svg>
<svg class="a" style="left:390.5px;top:439.3px" width="16" height="12.7" viewBox="0 0 16 12.7"><rect x="0" y="3" width="10.5" height="9.7" fill="#161616"/><rect x="4.3" y="0" width="11.2" height="9.2" fill="#ece8e2"/><path d="M6 1.5V8M8 1.5V8M10 1.5V8" stroke="#c9c4bc" stroke-width="0.8"/></svg>
<svg class="a" style="left:416.9px;top:439px" width="13.8" height="12.9" viewBox="0 0 13.8 12.9"><path d="M6.9 0.8A6 6 0 1 1 3 11.4L1 12.4L1.6 9.6A6 6 0 0 1 6.9 0.8Z" fill="#f1efff" stroke="#5a55c6" stroke-width="1.7"/><rect x="3.9" y="4.6" width="4.4" height="3.9" rx="0.5" fill="#5a55c6"/><path d="M8.6 5.4L10.2 4.5V8.6L8.6 7.7Z" fill="#5a55c6"/></svg>
<svg class="a" style="left:443.2px;top:438.7px" width="15.7" height="13.6" viewBox="0 0 15.7 13.6"><defs><linearGradient id="eg" x1="0" y1="1" x2="1" y2="0"><stop offset="0" stop-color="#0c4fa8"/><stop offset="0.5" stop-color="#1790d8"/><stop offset="1" stop-color="#5fd58a"/></linearGradient></defs><ellipse cx="7.6" cy="6.8" rx="7.4" ry="6.7" fill="url(#eg)"/><path d="M6.3 8.2Q9.5 7.2 15.7 8.6V13.6H6.5Q5.6 10.5 6.3 8.2Z" fill="#dbe3f5"/><path d="M7.5 13.4Q3.6 12.2 4.5 8.5Q6 12.4 12.5 11.8Q10.5 13.8 7.5 13.4Z" fill="#0f5bb8"/><ellipse cx="7.4" cy="7.2" rx="1.9" ry="1.8" fill="#9fe7f4"/></svg>
<svg class="a" style="left:470.2px;top:440.3px" width="14.7" height="10.2" viewBox="0 0 14.7 10.2"><rect x="0" y="0" width="14.7" height="10.2" rx="1" fill="#9fd0f0"/><rect x="1.2" y="1.2" width="12.3" height="7.8" fill="#cbe7f7"/><circle cx="5.5" cy="5" r="2.6" fill="#3a86c8"/><rect x="8.5" y="2.5" width="3.5" height="1" fill="#3a86c8"/><rect x="8.5" y="5" width="3.5" height="1" fill="#3a86c8"/></svg>
<svg class="a" style="left:495.8px;top:438.9px" width="16.1" height="13.1" viewBox="0 0 16.1 13.1"><path d="M0 1Q0 0 1 0H5.5L7 1.6H15.1Q16.1 1.6 16.1 2.6V12.1Q16.1 13.1 15.1 13.1H1Q0 13.1 0 12.1Z" fill="#f0b429"/><rect x="0" y="3.2" width="16.1" height="9.9" rx="1" fill="#fcd45c"/><rect x="3.2" y="9.6" width="9.7" height="3.3" rx="0.8" fill="#1d5fb8"/></svg>
<svg class="a" style="left:524.6px;top:438px" width="11.2" height="14.6" viewBox="0 0 11.2 14.6"><rect x="0" y="1.5" width="11.2" height="13.1" rx="0.8" fill="#2f9bd6"/><path d="M2 0V3M4.4 0V3M6.8 0V3M9.2 0V3" stroke="#1b5d86" stroke-width="1"/><path d="M2 6H9.2M2 8.4H9.2M2 10.8H9.2" stroke="#c7ecfb" stroke-width="1.1"/><rect x="0" y="13.2" width="11.2" height="1.4" fill="#8a6f80"/></svg>
<svg class="a" style="left:551.4px;top:439.5px" width="11.1" height="12.5" viewBox="0 0 11.1 12.5"><rect x="0" y="0" width="11.1" height="12.5" fill="#f4f6f8" stroke="#9aa7b4" stroke-width="0.8"/><rect x="0" y="0" width="11.1" height="2.3" fill="#6f8aa6"/><path d="M2 4.5H9M2 6.5H9M2 8.5H7" stroke="#b7c2cc" stroke-width="0.8"/></svg>
<div class="a" style="left:555.9px;top:455px;width:2.4px;height:1.4px;background:#777;border-radius:1px"></div>
<div class="a" style="left:571.7px;top:433.5px;width:23.1px;height:25.5px;background:rgba(255,255,255,.35);border-radius:3px"></div>
<svg class="a" style="left:576.4px;top:438.2px" width="14" height="14" viewBox="0 0 14 14"><circle cx="6.9" cy="6.9" r="6.9" fill="#db4437"/><path d="M6.9 6.9L0.93 3.45A6.9 6.9 0 0 0 6.9 13.8Z" fill="#0f9d58"/><path d="M6.9 6.9L6.9 13.8A6.9 6.9 0 0 0 12.87 3.45Z" fill="#f4b400"/><circle cx="6.9" cy="6.9" r="3.3" fill="#fff"/><circle cx="6.9" cy="6.9" r="2.5" fill="#4285f4"/></svg>
<div class="a" style="left:578px;top:455px;width:10px;height:1.6px;background:#1f6fc5;border-radius:1px"></div>
</body></html>
